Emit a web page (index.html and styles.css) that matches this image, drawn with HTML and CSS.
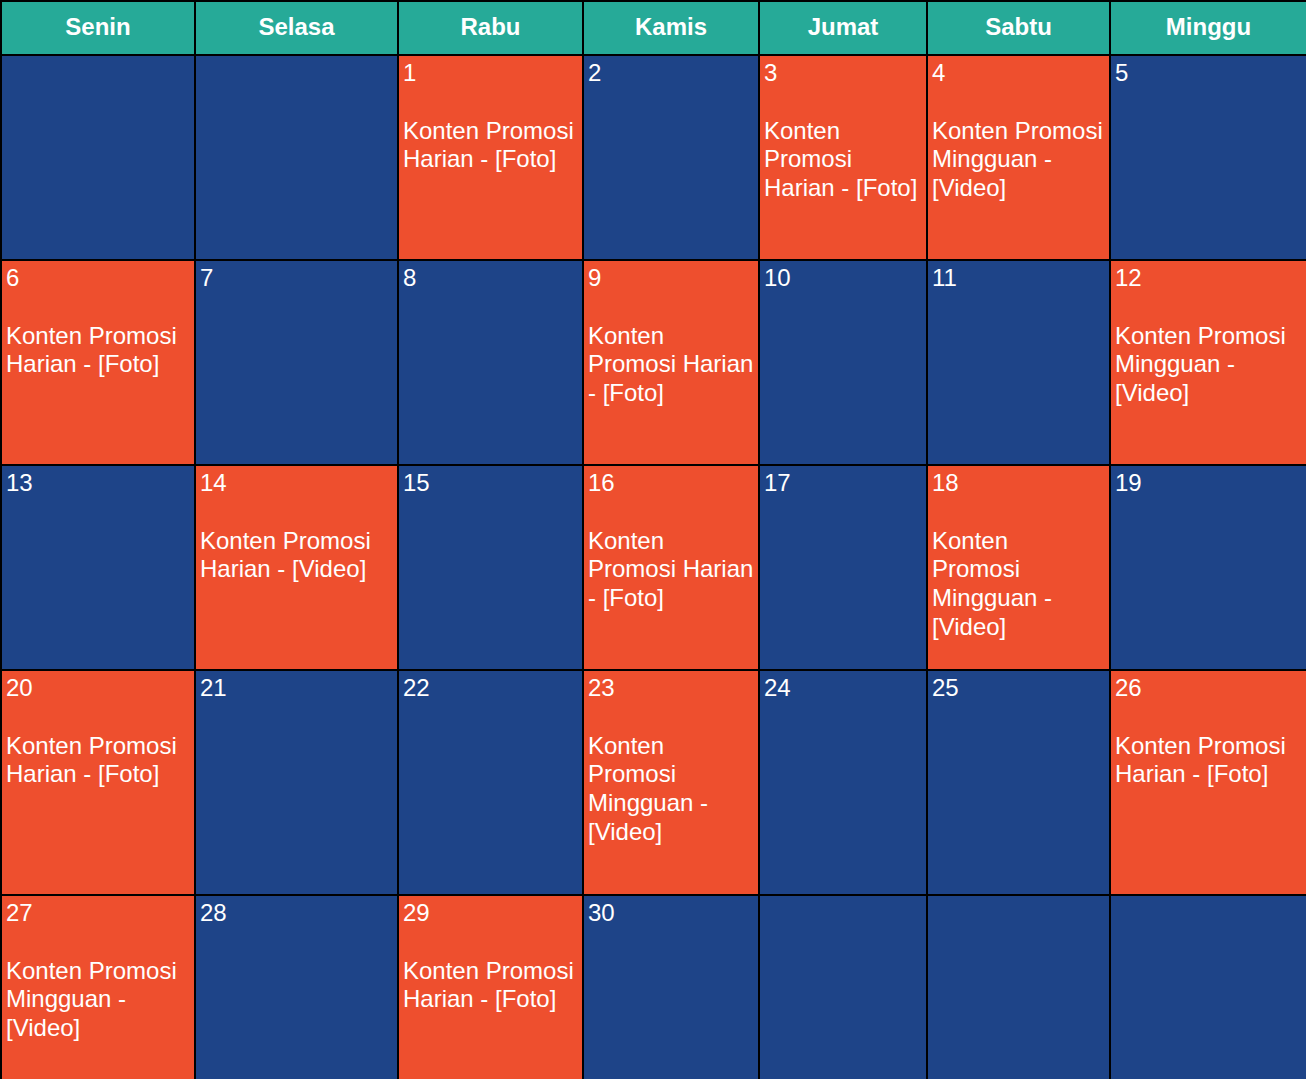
FILE: index.html
```html
<!DOCTYPE html>
<html lang="id">
<head>
<meta charset="utf-8">
<title>Kalender Konten</title>
<link rel="stylesheet" href="styles.css">
</head>
<body>
<table class="calendar">
  <colgroup>
    <col class="c1"><col class="c2"><col class="c3"><col class="c4"><col class="c5"><col class="c6"><col class="c7">
  </colgroup>
  <thead>
    <tr class="head-row">
      <th>Senin</th><th>Selasa</th><th>Rabu</th><th>Kamis</th><th>Jumat</th><th>Sabtu</th><th>Minggu</th>
    </tr>
  </thead>
  <tbody>
    <tr class="week">
      <td class="day"></td>
      <td class="day"></td>
      <td class="day event">1<br><br>Konten Promosi Harian - [Foto]</td>
      <td class="day">2</td>
      <td class="day event">3<br><br>Konten Promosi Harian - [Foto]</td>
      <td class="day event">4<br><br>Konten Promosi Mingguan - [Video]</td>
      <td class="day">5</td>
    </tr>
    <tr class="week">
      <td class="day event">6<br><br>Konten Promosi Harian - [Foto]</td>
      <td class="day">7</td>
      <td class="day">8</td>
      <td class="day event">9<br><br>Konten Promosi Harian - [Foto]</td>
      <td class="day">10</td>
      <td class="day">11</td>
      <td class="day event">12<br><br>Konten Promosi Mingguan - [Video]</td>
    </tr>
    <tr class="week">
      <td class="day">13</td>
      <td class="day event">14<br><br>Konten Promosi Harian - [Video]</td>
      <td class="day">15</td>
      <td class="day event">16<br><br>Konten Promosi Harian - [Foto]</td>
      <td class="day">17</td>
      <td class="day event">18<br><br>Konten<br>Promosi Mingguan - [Video]</td>
      <td class="day">19</td>
    </tr>
    <tr class="week week-tall">
      <td class="day event">20<br><br>Konten Promosi Harian - [Foto]</td>
      <td class="day">21</td>
      <td class="day">22</td>
      <td class="day event">23<br><br>Konten Promosi Mingguan - [Video]</td>
      <td class="day">24</td>
      <td class="day">25</td>
      <td class="day event">26<br><br>Konten Promosi Harian - [Foto]</td>
    </tr>
    <tr class="week">
      <td class="day event">27<br><br>Konten Promosi Mingguan - [Video]</td>
      <td class="day">28</td>
      <td class="day event">29<br><br>Konten Promosi Harian - [Foto]</td>
      <td class="day">30</td>
      <td class="day"></td>
      <td class="day"></td>
      <td class="day"></td>
    </tr>
  </tbody>
</table>
</body>
</html>
```

FILE: styles.css
```css
html, body {
  margin: 0;
  padding: 0;
  background: #ffffff;
}

body {
  font-family: "Liberation Sans", Arial, sans-serif;
  font-size: 24px;
  line-height: 1.2;
  color: #ffffff;
}

.calendar {
  width: 1306px;
  border-collapse: collapse;
  table-layout: fixed;
}

.c1 { width: 194px; }
.c2 { width: 203px; }
.c3 { width: 185px; }
.c4 { width: 176px; }
.c5 { width: 168px; }
.c6 { width: 183px; }
.c7 { width: 197px; }

.calendar th,
.calendar td {
  border: 2px solid #000000;
}

.head-row {
  height: 54px;
}

.calendar th {
  background: #26aa98;
  color: #ffffff;
  font-weight: bold;
  text-align: center;
  vertical-align: middle;
  padding: 0 3px 2px;
}

.week {
  height: 205px;
}

.week-tall {
  height: 225px;
}

.day {
  background: #1e4488;
  vertical-align: top;
  text-align: left;
  padding: 3px 4px;
}

.day.event {
  background: #ee4f2e;
}
```
